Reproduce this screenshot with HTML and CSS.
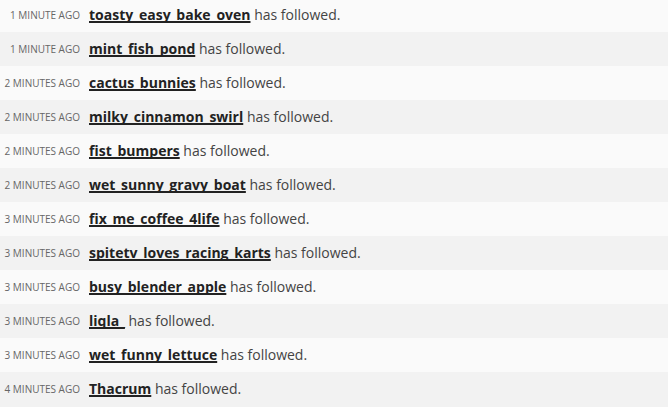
FILE: index.html
```html
<!DOCTYPE html>
<html>
<head>
<meta charset="utf-8">
<link rel="stylesheet" href="styles.css">
</head>
<body>
<ul class="feed">
  <li class="row"><span class="time">1 minute ago</span><span class="msg"><a class="user" href="#">toasty_easy_bake_oven</a> has followed.</span></li>
  <li class="row"><span class="time">1 minute ago</span><span class="msg"><a class="user" href="#">mint_fish_pond</a> has followed.</span></li>
  <li class="row"><span class="time">2 minutes ago</span><span class="msg"><a class="user" href="#">cactus_bunnies</a> has followed.</span></li>
  <li class="row"><span class="time">2 minutes ago</span><span class="msg"><a class="user" href="#">milky_cinnamon_swirl</a> has followed.</span></li>
  <li class="row"><span class="time">2 minutes ago</span><span class="msg"><a class="user" href="#">fist_bumpers</a> has followed.</span></li>
  <li class="row"><span class="time">2 minutes ago</span><span class="msg"><a class="user" href="#">wet_sunny_gravy_boat</a> has followed.</span></li>
  <li class="row"><span class="time">3 minutes ago</span><span class="msg"><a class="user" href="#">fix_me_coffee_4life</a> has followed.</span></li>
  <li class="row"><span class="time">3 minutes ago</span><span class="msg"><a class="user" href="#">spitetv_loves_racing_karts</a> has followed.</span></li>
  <li class="row"><span class="time">3 minutes ago</span><span class="msg"><a class="user" href="#">busy_blender_apple</a> has followed.</span></li>
  <li class="row"><span class="time">3 minutes ago</span><span class="msg"><a class="user" href="#">liqla_</a> has followed.</span></li>
  <li class="row"><span class="time">3 minutes ago</span><span class="msg"><a class="user" href="#">wet_funny_lettuce</a> has followed.</span></li>
  <li class="row"><span class="time">4 minutes ago</span><span class="msg"><a class="user" href="#">Thacrum</a> has followed.</span></li>
</ul>
</body>
</html>
```
FILE: styles.css
```css
html, body {
  margin: 0;
  padding: 0;
  background: #f2f2f2;
  font-family: "Open Sans", "Liberation Sans", sans-serif;
}
.feed {
  list-style: none;
  margin: -2px 0 0 0;
  padding: 0;
}
.row {
  display: flex;
  align-items: center;
  box-sizing: border-box;
  height: 34px;
  padding-bottom: 2px;
  background: #fafafa;
}
.row:nth-child(even) {
  background: #f2f2f2;
}
.time {
  width: 80px;
  flex: none;
  text-align: right;
  font-size: 10px;
  text-transform: uppercase;
  color: #666;
  padding-top: 1px;
}
.msg {
  margin-left: 9px;
  font-size: 14px;
  color: #444;
}
.user {
  color: #222;
  font-weight: 700;
  text-decoration: underline;
  text-decoration-thickness: 1.5px;
  text-decoration-skip-ink: none;
}
```
